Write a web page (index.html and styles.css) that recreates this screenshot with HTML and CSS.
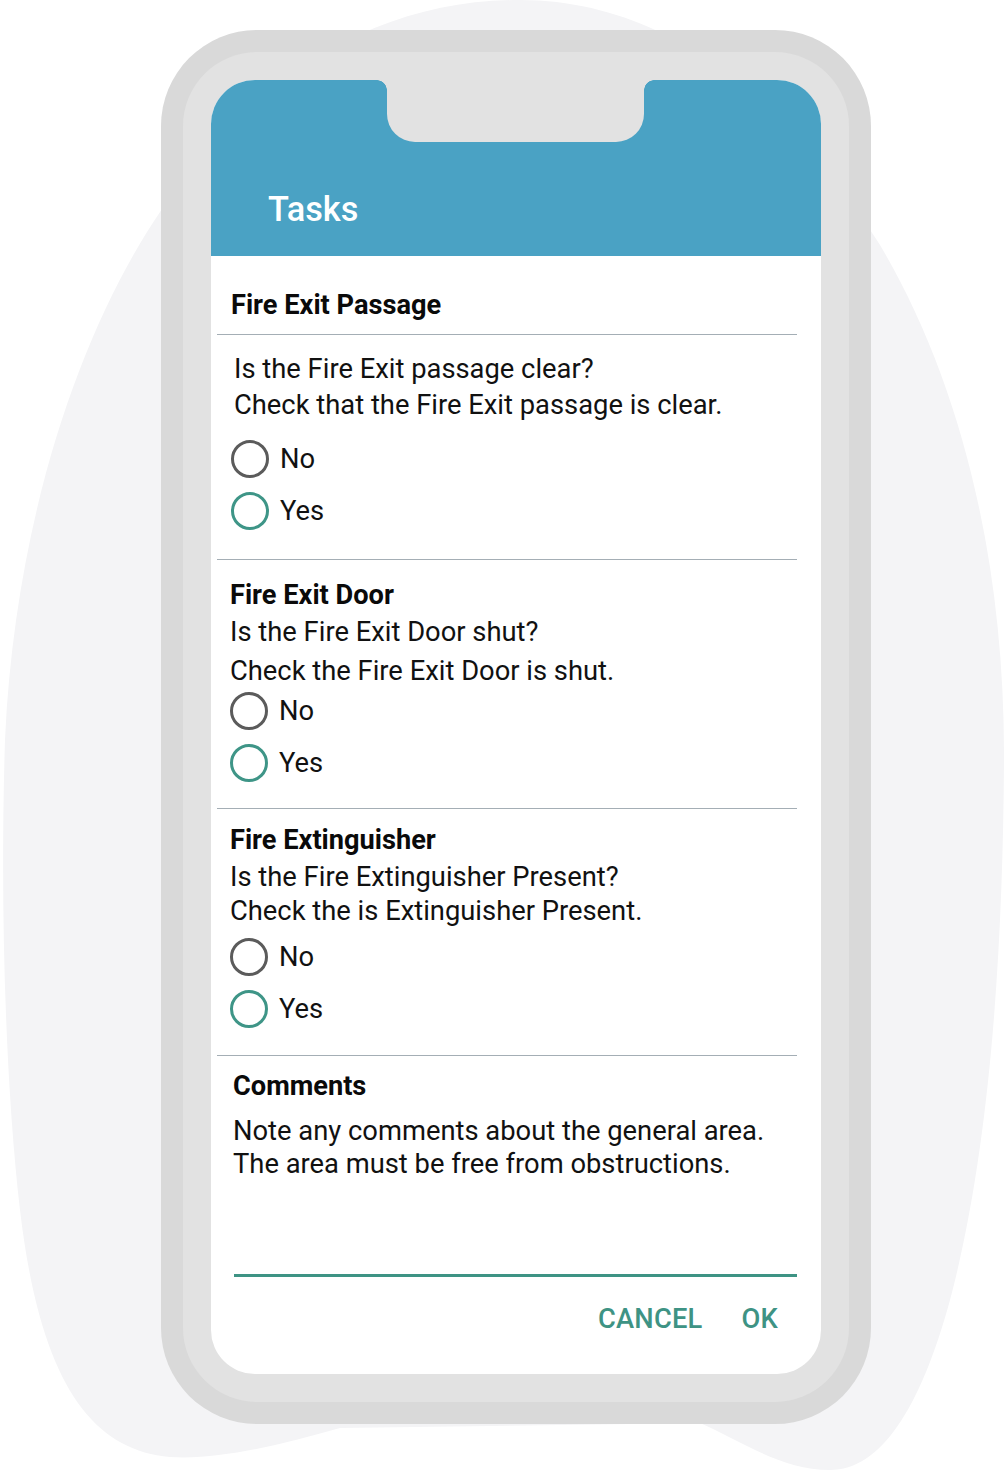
FILE: index.html
```html
<!DOCTYPE html>
<html lang="en">
<head>
<meta charset="utf-8">
<title>Tasks</title>
<link rel="stylesheet" href="styles.css">
</head>
<body>
<div class="stage">
  <svg class="blob" width="1005" height="1474" viewBox="0 0 1005 1474" aria-hidden="true">
    <path d="M 520 0 C 700 0 820 150 880 245 C 960 380 1005 560 1004 760 C 1003 950 990 1150 950 1300 C 920 1410 880 1470 830 1470 C 780 1470 740 1440 700 1423 L 340 1428 C 280 1445 220 1460 170 1457 C 90 1450 40 1380 20 1210 C 5 1080 0 900 5 740 C 15 520 80 330 160 212 C 260 70 380 0 520 0 Z" fill="#f4f4f6"/>
  </svg>
  <div class="phone">
    <div class="bezel">
      <div class="screen">
        <header class="appbar">
          <div class="notch"></div>
          <h1 class="appbar-title">Tasks</h1>
        </header>
        <main class="content">
          <section class="sec sec-passage-head">
            <h2 class="sec-title">Fire Exit Passage</h2>
          </section>
          <section class="sec sec-passage">
            <p class="q q-36">Is the Fire Exit passage clear?</p>
            <p class="q q-36">Check that the Fire Exit passage is clear.</p>
            <div class="radios">
              <label class="radio"><span class="dot dot-no"></span><span class="radio-label">No</span></label>
              <label class="radio"><span class="dot dot-yes"></span><span class="radio-label">Yes</span></label>
            </div>
          </section>
          <section class="sec sec-door">
            <h2 class="sec-title">Fire Exit Door</h2>
            <p class="q q-39">Is the Fire Exit Door shut?</p>
            <p class="q q-39">Check the Fire Exit Door is shut.</p>
            <div class="radios">
              <label class="radio"><span class="dot dot-no"></span><span class="radio-label">No</span></label>
              <label class="radio"><span class="dot dot-yes"></span><span class="radio-label">Yes</span></label>
            </div>
          </section>
          <section class="sec sec-ext">
            <h2 class="sec-title">Fire Extinguisher</h2>
            <p class="q q-34">Is the Fire Extinguisher Present?</p>
            <p class="q q-34">Check the is Extinguisher Present.</p>
            <div class="radios">
              <label class="radio"><span class="dot dot-no"></span><span class="radio-label">No</span></label>
              <label class="radio"><span class="dot dot-yes"></span><span class="radio-label">Yes</span></label>
            </div>
          </section>
          <section class="comments">
            <h2 class="sec-title">Comments</h2>
            <p class="q q-33 comments-text">Note any comments about the general area.<br>The area must be free from obstructions.</p>
            <div class="input-line"></div>
            <div class="actions">
              <button class="btn" type="button">CANCEL</button>
              <button class="btn" type="button">OK</button>
            </div>
          </section>
        </main>
      </div>
    </div>
  </div>
</div>
</body>
</html>
```

FILE: styles.css
```css
* { box-sizing: border-box; }

html, body {
  margin: 0;
  padding: 0;
  background: #ffffff;
}

body {
  font-family: Roboto, "Noto Sans", "Liberation Sans", sans-serif;
  color: #111111;
}

.stage {
  position: relative;
  width: 1005px;
  height: 1474px;
  overflow: hidden;
  padding: 30px 0 0 161px;
}

.blob {
  position: absolute;
  left: 0;
  top: 0;
  z-index: 0;
}

.phone {
  position: relative;
  z-index: 1;
  width: 710px;
  height: 1394px;
  padding: 22px;
  border-radius: 96px;
  background: #d9d9d9;
}

.bezel {
  height: 100%;
  padding: 28px;
  border-radius: 74px;
  background: #e2e2e2;
}

.screen {
  height: 100%;
  background: #ffffff;
  border-radius: 44px;
  overflow: hidden;
  display: flex;
  flex-direction: column;
}

.appbar {
  position: relative;
  height: 176px;
  flex: none;
  background: #4aa2c4;
  display: flex;
  align-items: flex-end;
  padding: 0 0 27px 57px;
}

.notch {
  position: absolute;
  left: 176px;
  top: 0;
  width: 257px;
  height: 62px;
  background: #e2e2e2;
  border-radius: 0 0 28px 28px;
}

.notch::before,
.notch::after {
  content: "";
  position: absolute;
  top: 0;
  width: 10px;
  height: 10px;
}

.notch::before {
  left: -10px;
  background: radial-gradient(circle at 0 100%, transparent 9.5px, #e2e2e2 10px);
}

.notch::after {
  right: -10px;
  background: radial-gradient(circle at 100% 100%, transparent 9.5px, #e2e2e2 10px);
}

.appbar-title {
  margin: 0;
  font-size: 34.3px;
  line-height: 40px;
  font-weight: 500;
  color: #ffffff;
}

.content {
  flex: 1;
  padding: 0 24px 0 6px;
  display: flex;
  flex-direction: column;
}

.sec {
  border-bottom: 1px solid #a4aeb5;
}

.sec-title {
  margin: 0;
  font-size: 27.2px;
  line-height: 32px;
  font-weight: 700;
  color: #0a0a0a;
}

.q {
  margin: 0;
  font-size: 27.35px;
  font-weight: 400;
  color: #111111;
}

.q-39 { line-height: 39px; }
.q-36 { line-height: 36px; }
.q-34 { line-height: 34px; }
.q-33 { line-height: 33px; }

.sec-passage-head {
  padding: 33px 0 13px 14px;
}

.sec-passage {
  padding: 16px 0 22px 14px;
}

.sec-passage .q {
  padding-left: 3px;
}

.sec-passage .radios {
  margin-top: 10px;
}

.sec-door {
  padding: 19px 0 19px 13px;
}

.sec-door .sec-title {
  margin-bottom: 2px;
}

.sec-door .radios {
  margin-top: -6px;
}

.sec-ext {
  padding: 15px 0 20px 13px;
}

.sec-ext .sec-title {
  margin-bottom: 4px;
}

.sec-ext .radios {
  margin-top: 3px;
}

.radios {
  display: flex;
  flex-direction: column;
}

.radio {
  display: flex;
  align-items: center;
  height: 52px;
}

.dot {
  width: 38px;
  height: 38px;
  border-radius: 50%;
  border: 3px solid #5b5b5b;
  margin-right: 11px;
  flex: none;
}

.dot-yes {
  border-color: #3e9587;
}

.radio-label {
  font-size: 27.35px;
  line-height: 32px;
  color: #111111;
}

.comments {
  padding: 14px 0 0 16px;
  display: flex;
  flex-direction: column;
}

.comments-text {
  margin-top: 13px;
}

.input-line {
  margin-top: 93px;
  margin-left: 1px;
  height: 3px;
  background: #3e9384;
}

.actions {
  display: flex;
  justify-content: flex-end;
  gap: 39px;
  padding-right: 19px;
  margin-top: 26px;
}

.btn {
  border: 0;
  background: none;
  padding: 0;
  font-family: Roboto, "Noto Sans", "Liberation Sans", sans-serif;
  font-size: 27.3px;
  line-height: 32px;
  font-weight: 500;
  color: #3e9384;
  letter-spacing: 0.2px;
}
```
